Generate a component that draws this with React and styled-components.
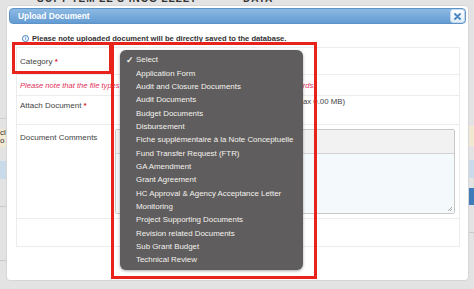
import React from "react";
import styled, { createGlobalStyle } from "styled-components";

const GlobalStyle = createGlobalStyle`
  html, body { margin: 0; padding: 0; }
  body { font-family: "Liberation Sans", Arial, sans-serif; background: #e3e3e3; }
  * { box-sizing: border-box; }
`;

const Page = styled.div`
  position: relative;
  width: 474px;
  height: 289px;
  overflow: hidden;
  background: #e3e3e3;
  display: flex;
  flex-direction: column;
`;

const TopStrip = styled.div`
  height: 6px;
  overflow: hidden;
  display: flex;
  padding-left: 37px;
`;

const TopText = styled.div`
  width: ${(p) => p.$w || "auto"};
  margin-top: -7px;
  font-size: 10px;
  font-weight: bold;
  color: #333;
  letter-spacing: 1px;
  white-space: nowrap;
  overflow: hidden;
`;

const Sides = styled.div`
  flex: 1;
  display: flex;
  justify-content: space-between;
`;

const Strip = styled.div`
  width: 8px;
  display: flex;
  flex-direction: column;
  padding-top: ${(p) => p.$top}px;
`;

const StripBlock = styled.div`
  height: ${(p) => p.$h}px;
  margin-bottom: ${(p) => p.$mb || 0}px;
  background: ${(p) => p.$bg};
  border-bottom: ${(p) => (p.$line ? "1px solid #c9c9c9" : "none")};
  font-size: 8px;
  color: #333;
  overflow: hidden;
  line-height: 8px;
`;

const Modal = styled.div`
  position: absolute;
  left: 6px;
  top: 5px;
  width: 463px;
  height: 276px;
  background: #fff;
  border: 1px solid #d6d6d6;
  border-radius: 4px;
  padding: 2px;
  display: flex;
  flex-direction: column;
`;

const Header = styled.div`
  height: 16px;
  border-radius: 4px;
  border: 1px solid #5d93c8;
  background: linear-gradient(#8dbae3, #639bd2);
  display: flex;
  align-items: center;
  justify-content: space-between;
  padding: 0 0 0 8px;
`;

const Title = styled.div`
  color: #fff;
  font-weight: bold;
  font-size: 8.4px;
`;

const Close = styled.div`
  width: 15px;
  height: 14px;
  border-radius: 3px;
  background: linear-gradient(#ffffff, #e2eef8);
  border: 1px solid #c5d9ec;
  display: flex;
  align-items: center;
  justify-content: center;
`;

const Body = styled.div`
  padding: 8px 7px 0 7px;
  display: flex;
  flex-direction: column;
`;

const Info = styled.div`
  display: flex;
  align-items: center;
  gap: 3px;
  padding-left: 6px;
  font-size: 7.6px;
  font-weight: bold;
  color: #333;
  height: 12px;
`;

const InfoIcon = styled.div`
  width: 7px;
  height: 7px;
  border-radius: 50%;
  border: 1px solid #3c7fc2;
  color: #3c7fc2;
  font-size: 5px;
  line-height: 5px;
  text-align: center;
  font-weight: bold;
`;

const Panel = styled.div`
  margin-top: 3px;
  border: 1px solid #ececec;
  width: 444px;
  display: flex;
  flex-direction: column;
`;

const Row = styled.div`
  height: ${(p) => p.$h}px;
  border-bottom: ${(p) => (p.$last ? "none" : "1px solid #ececec")};
  display: grid;
  grid-template-columns: 98px 1fr;
  align-items: ${(p) => p.$align || "center"};
`;

const Label = styled.div`
  padding-left: 3px;
  padding-top: ${(p) => p.$pt || 0}px;
  font-size: 8px;
  color: #444;
`;

const Req = styled.span`
  color: #d9232d;
  font-weight: bold;
`;

const ErrorText = styled.div`
  grid-column: 1 / span 2;
  padding-left: 3px;
  font-size: 7.6px;
  font-style: italic;
  color: #e0325a;
  white-space: nowrap;
`;

const FileHint = styled.div`
  justify-self: end;
  padding-right: 114px;
  padding-top: 1px;
  font-size: 7.8px;
  color: #444;
`;

const FieldCell = styled.div`
  padding: 4px 4px 0 0;
  align-self: start;
`;

const TextArea = styled.div`
  height: 85px;
  border: 1px solid #c8c8c8;
  border-radius: 2px;
  display: flex;
  flex-direction: column;
  position: relative;
`;

const TextAreaTop = styled.div`
  height: 24px;
  background: #f2f2f2;
  border-bottom: 1px solid #d2d2d2;
`;

const TextAreaMain = styled.div`
  flex: 1;
  background: #f4f9fb;
`;

const Grip = styled.svg`
  position: absolute;
  right: 1px;
  bottom: 1px;
`;

const Annot = styled.div`
  position: absolute;
  left: ${(p) => p.$x}px;
  top: ${(p) => p.$y}px;
  width: ${(p) => p.$w}px;
  height: ${(p) => p.$h}px;
  border: 3px solid #e8231c;
`;

const Menu = styled.div`
  position: absolute;
  left: 120px;
  top: 50px;
  width: 183px;
  height: 220px;
  background: #5f5d5d;
  border-radius: 6px;
  box-shadow: 0 1px 3px rgba(0, 0, 0, 0.35);
  padding-top: 3px;
  display: flex;
  flex-direction: column;
`;

const Item = styled.div`
  height: 13.35px;
  display: flex;
  align-items: center;
  padding-left: 16px;
  position: relative;
  font-size: 7.9px;
  color: #f4f2ee;
  white-space: nowrap;
`;

const Check = styled.span`
  position: absolute;
  left: 6px;
  font-size: 9px;
  font-weight: bold;
`;

const items = [
  "Application Form",
  "Audit and Closure Documents",
  "Audit Documents",
  "Budget Documents",
  "Disbursement",
  "Fiche supplémentaire à la Note Conceptuelle",
  "Fund Transfer Request (FTR)",
  "GA Amendment",
  "Grant Agreement",
  "HC Approval & Agency Acceptance Letter",
  "Monitoring",
  "Project Supporting Documents",
  "Revision related Documents",
  "Sub Grant Budget",
  "Technical Review",
];

export default function App() {
  return (
    <>
      <GlobalStyle />
      <Page>
        <TopStrip>
          <TopText $w="206px">SOFT TEM ZZ S INCG ZZZZT</TopText>
          <TopText>DATA</TopText>
        </TopStrip>
        <Sides>
          <Strip $top={112}>
            <StripBlock $h={1} $bg="#cfcfcf" $mb={10} />
            <StripBlock $h={18} $bg="#f1e8d2" $mb={14}>cl<br />o</StripBlock>
            <StripBlock $h={18} $bg="#c9dbea" $mb={14} />
            <StripBlock $h={14} $bg="#e3e3e3" $line $mb={40} />
            <StripBlock $h={14} $bg="#e3e3e3" $line />
          </Strip>
          <Strip $top={108}>
            <StripBlock $h={12} $bg="#e3e3e3" />
            <StripBlock $h={20} $bg="#f1e8d2" $mb={14} />
            <StripBlock $h={18} $bg="#c9dbea" $mb={10} />
            <StripBlock $h={17} $bg="#3f7bb8" $mb={14} />
            <StripBlock $h={14} $bg="#e3e3e3" $line />
          </Strip>
        </Sides>

        <Modal>
          <Header>
            <Title>Upload Document</Title>
            <Close>
              <svg width="7" height="7" viewBox="0 0 7 7">
                <path d="M1 1 L6 6 M6 1 L1 6" stroke="#4a86c3" strokeWidth="1.8" strokeLinecap="round" />
              </svg>
            </Close>
          </Header>
          <Body>
            <Info>
              <InfoIcon>i</InfoIcon>
              Please note uploaded document will be directly saved to the database.
            </Info>
            <Panel>
              <Row $h={27}>
                <Label>Category <Req>*</Req></Label>
                <div />
              </Row>
              <Row $h={21}>
                <ErrorText>Please note that the file types allowed and max file sizes are set per the upload records:</ErrorText>
              </Row>
              <Row $h={29} $align="start">
                <Label $pt={5}>Attach Document <Req>*</Req></Label>
                <FileHint>Choose file (max 0.00 MB)</FileHint>
              </Row>
              <Row $h={94} $align="start">
                <Label $pt={8}>Document Comments</Label>
                <FieldCell>
                  <TextArea>
                    <TextAreaTop />
                    <TextAreaMain />
                    <Grip width="6" height="6" viewBox="0 0 6 6">
                      <path d="M5 1 L1 5 M5 3 L3 5" stroke="#999" strokeWidth="0.8" />
                    </Grip>
                  </TextArea>
                </FieldCell>
              </Row>
              <Row $h={27} $last />
            </Panel>
          </Body>
        </Modal>

        <Annot $x={12} $y={42} $w={100} $h={32} />
        <Annot $x={111} $y={42} $w={206} $h={237} />

        <Menu>
          <Item><Check>✓</Check>Select</Item>
          {items.map((t) => (
            <Item key={t}>{t}</Item>
          ))}
        </Menu>
      </Page>
    </>
  );
}
